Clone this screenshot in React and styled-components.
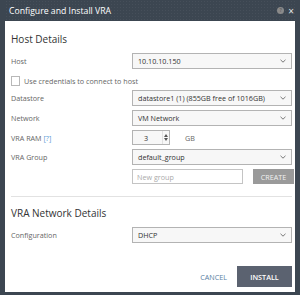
import React from "react";
import styled, { createGlobalStyle } from "styled-components";

const Global = createGlobalStyle`
  html, body {
    margin: 0;
    padding: 0;
    background: #3c4651;
  }
  body {
    font-family: "Open Sans", "Liberation Sans", sans-serif;
  }
`;

const Dialog = styled.div`
  box-sizing: border-box;
  width: 300px;
  height: 295px;
  display: flex;
  flex-direction: column;
  padding: 0 5px 3px 5px;
  background: #3c4651;
`;

const TitleBar = styled.div`
  height: 21px;
  flex: none;
  display: flex;
  align-items: center;
  justify-content: space-between;
  padding: 0 1px 0 4px;
  color: #ffffff;
  font-size: 8.7px;
  background-image: radial-gradient(rgba(255, 255, 255, 0.05) 1px, transparent 1px);
  background-size: 3px 3px;
`;

const TitleTools = styled.div`
  display: flex;
  align-items: center;
  gap: 4px;
`;

const HelpDot = styled.span`
  width: 7px;
  height: 7px;
  border-radius: 50%;
  background: #8a8a8a;
  color: #666;
  font-size: 5px;
  line-height: 7px;
  text-align: center;
  font-weight: 700;
`;

const Close = styled.span`
  color: #e6e6e6;
  font-size: 10px;
  line-height: 10px;
`;

const Body = styled.div`
  flex: 1;
  min-width: 0;
  display: flex;
  flex-direction: column;
  background: #ffffff;
  padding: 12px 3px 5px 6px;
`;

const Heading = styled.h2`
  margin: ${(p) => p.$top ?? 0}px 0 ${(p) => p.$bottom ?? 7}px;
  font-size: 10px;
  line-height: 12px;
  font-weight: 400;
  color: #333;
`;

const Fields = styled.div`
  display: grid;
  grid-template-columns: 121px minmax(0, 1fr);
  align-items: center;
  row-gap: 4px;
`;

const Label = styled.div`
  font-size: 7.2px;
  color: #666;
`;

const Help = styled.span`
  color: #5b9bd5;
`;

const CheckRow = styled.label`
  grid-column: 1 / span 2;
  height: 13px;
  display: flex;
  align-items: flex-end;
  gap: 4px;
  font-size: 7.2px;
  line-height: 10px;
  color: #666;
`;

const Box = styled.span`
  box-sizing: border-box;
  width: 9px;
  height: 10px;
  border: 1px solid #b8b8b8;
  background: #fff;
`;

const Select = styled.div`
  box-sizing: border-box;
  height: 16px;
  display: flex;
  align-items: center;
  justify-content: space-between;
  padding: 0 5px;
  border: 1px solid #b3b3b3;
  background: #f7f7f7;
  font-size: 7.2px;
  color: #333;
  white-space: nowrap;
`;

const Inline = styled.div`
  display: flex;
  align-items: center;
  gap: ${(p) => p.$gap ?? 15}px;
`;

const Spinner = styled.div`
  box-sizing: border-box;
  width: 38px;
  height: 15px;
  display: flex;
  align-items: center;
  justify-content: space-between;
  padding-left: 11px;
  border: 1px solid #b3b3b3;
  background: #f7f7f7;
  font-size: 7.2px;
  color: #333;
`;

const Arrows = styled.div`
  width: 6px;
  height: 100%;
  display: flex;
  flex-direction: column;
  align-items: center;
  justify-content: center;
  gap: 1px;
  border-left: 1px solid #e0e0e0;
`;

const Unit = styled.span`
  font-size: 7.2px;
  color: #666;
`;

const Input = styled.div`
  box-sizing: border-box;
  width: 111px;
  height: 15px;
  display: flex;
  align-items: center;
  padding: 0 4px;
  border: 1px solid #c4c4c4;
  background: #fff;
  font-size: 7.2px;
  color: #aaa;
`;

const CreateButton = styled.div`
  width: 41px;
  height: 15px;
  margin-left: 10px;
  margin-right: -2px;
  display: flex;
  align-items: center;
  justify-content: center;
  background: #9a9a9a;
  color: #f2f2f2;
  font-size: 7.2px;
`;

const Divider = styled.hr`
  margin: 12px 0 0;
  border: 0;
  border-top: 1px solid #e2e2e2;
`;

const Footer = styled.div`
  margin-top: auto;
  display: flex;
  justify-content: flex-end;
  align-items: center;
  gap: 10px;
`;

const TextButton = styled.span`
  font-size: 7.2px;
  color: #5a80a3;
`;

const PrimaryButton = styled.div`
  width: 55px;
  height: 21px;
  display: flex;
  align-items: center;
  justify-content: center;
  background: #5b6270;
  color: #ffffff;
  font-size: 7.2px;
  font-weight: 600;
`;

const Chevron = () => (
  <svg width="6" height="4" viewBox="0 0 6 4">
    <polyline points="0.5,0.8 3,3.2 5.5,0.8" fill="none" stroke="#777" strokeWidth="1" />
  </svg>
);

const Tri = ({ up }) => (
  <svg width="4" height="3" viewBox="0 0 4 3">
    <polygon points={up ? "0,3 2,0 4,3" : "0,0 4,0 2,3"} fill="#555" />
  </svg>
);

const Dropdown = ({ children }) => (
  <Select>
    <span>{children}</span>
    <Chevron />
  </Select>
);

export default function App() {
  return (
    <>
      <Global />
      <Dialog>
        <TitleBar>
          <span>Configure and Install VRA</span>
          <TitleTools>
            <HelpDot>?</HelpDot>
            <Close>×</Close>
          </TitleTools>
        </TitleBar>
        <Body>
          <Heading $bottom={8}>Host Details</Heading>
          <Fields>
            <Label>Host</Label>
            <Dropdown>10.10.10.150</Dropdown>

            <CheckRow>
              <Box />
              Use credentials to connect to host
            </CheckRow>

            <Label>Datastore</Label>
            <Dropdown>datastore1 (1) (855GB free of 1016GB)</Dropdown>

            <Label>Network</Label>
            <Dropdown>VM Network</Dropdown>

            <Label>
              VRA RAM <Help>[?]</Help>
            </Label>
            <Inline>
              <Spinner>
                3
                <Arrows>
                  <Tri up />
                  <Tri />
                </Arrows>
              </Spinner>
              <Unit>GB</Unit>
            </Inline>

            <Label>VRA Group</Label>
            <Dropdown>default_group</Dropdown>

            <span />
            <Inline $gap={0}>
              <Input>New group</Input>
              <CreateButton>CREATE</CreateButton>
            </Inline>
          </Fields>

          <Divider />

          <Heading $top={10} $bottom={8}>VRA Network Details</Heading>
          <Fields>
            <Label>Configuration</Label>
            <Dropdown>DHCP</Dropdown>
          </Fields>

          <Footer>
            <TextButton>CANCEL</TextButton>
            <PrimaryButton>INSTALL</PrimaryButton>
          </Footer>
        </Body>
      </Dialog>
    </>
  );
}
